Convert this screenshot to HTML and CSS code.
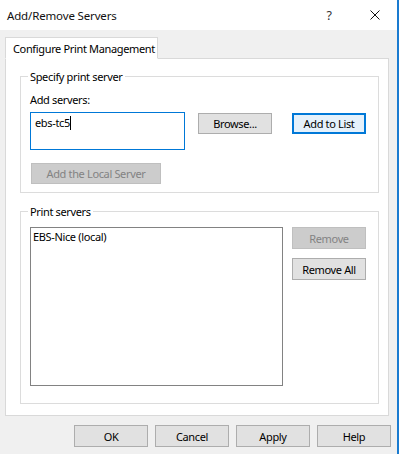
FILE: index.html
```html
<!DOCTYPE html>
<html>
<head>
<meta charset="utf-8">
<link rel="stylesheet" href="styles.css">
</head>
<body>
<div class="window">
  <div class="titlebar">
    <span class="title">Add/Remove Servers</span>
    <span class="caption-btn help">?</span>
    <span class="caption-btn close">
      <svg width="10" height="10" viewBox="0 0 10 10"><path d="M0.5 0.5 L9.5 9.5 M9.5 0.5 L0.5 9.5" stroke="#111" stroke-width="1" fill="none"/></svg>
    </span>
  </div>
  <div class="client">
    <div class="tabs">
      <div class="tab">Configure Print Management</div>
    </div>
    <div class="panel">
      <div class="group group-specify">
        <div class="legend">Specify print server</div>
        <div class="label">Add servers:</div>
        <div class="row">
          <div class="textbox">ebs-tc5<span class="caret"></span></div>
          <button class="btn browse">Browse...</button>
          <button class="btn default add-list">Add to List</button>
        </div>
        <button class="btn disabled local">Add the Local Server</button>
      </div>
      <div class="group group-servers">
        <div class="legend">Print servers</div>
        <div class="row">
          <div class="listbox"><div class="item">EBS-Nice (local)</div></div>
          <div class="side-buttons">
            <button class="btn disabled">Remove</button>
            <button class="btn">Remove All</button>
          </div>
        </div>
      </div>
    </div>
    <div class="dialog-buttons">
      <button class="btn">OK</button>
      <button class="btn">Cancel</button>
      <button class="btn">Apply</button>
      <button class="btn">Help</button>
    </div>
  </div>
</div>
</body>
</html>
```

FILE: styles.css
```css
html, body {
  margin: 0;
  padding: 0;
  background: #f0f0f0;
}
body {
  font-family: "Segoe UI", "Noto Sans", sans-serif;
  font-size: 11px;
  letter-spacing: -0.35px;
  color: #000;
}
.window {
  width: 397px;
  height: 454px;
  border-right: 2px solid #1a7bd0;
  display: flex;
  flex-direction: column;
  background: #f0f0f0;
}
.titlebar {
  height: 30px;
  background: #ffffff;
  display: flex;
  align-items: center;
  padding-left: 7px;
  flex: none;
}
.title {
  flex: 1;
  font-size: 11.5px;
  letter-spacing: -0.15px;
  line-height: 15px;
  color: #111;
}
.caption-btn {
  width: 46px;
  height: 30px;
  display: flex;
  align-items: center;
  justify-content: center;
}
.caption-btn.help {
  font-size: 12.5px;
  color: #333;
}
.caption-btn.close {
  width: 45px;
}
.client {
  flex: 1;
  padding: 7px 8px 0 5px;
  display: flex;
  flex-direction: column;
}
.tabs {
  display: flex;
}
.tab {
  position: relative;
  z-index: 1;
  box-sizing: border-box;
  width: 153px;
  height: 22px;
  padding: 3px 0 0 7px;
  border: 1px solid #d9d9d9;
  border-bottom: 1px solid #ffffff;
  background: #ffffff;
  line-height: 15px;
  white-space: nowrap;
  margin-bottom: -1px;
}
.panel {
  height: 358px;
  box-sizing: border-box;
  border: 1px solid #d9d9d9;
  background: #ffffff;
  padding: 17px 0 0 14px;
}
.group {
  width: 359px;
  box-sizing: border-box;
  border: 1px solid #dcdcdc;
  padding-left: 9px;
}
.legend {
  width: fit-content;
  margin: -8px 0 0 -2px;
  padding: 0 2px;
  background: #ffffff;
  line-height: 15px;
  white-space: nowrap;
}
.label {
  margin-top: 8px;
  line-height: 15px;
}
.row {
  display: flex;
  align-items: flex-start;
}
.group-specify .row {
  margin-top: 5px;
}
.group-specify {
  padding-bottom: 8px;
}
.textbox {
  width: 155px;
  height: 38px;
  box-sizing: border-box;
  border: 1px solid #0078d7;
  padding: 2px 4px;
  line-height: 15px;
  display: flex;
  align-items: flex-start;
}
.caret {
  display: inline-block;
  width: 1px;
  height: 14px;
  background: #000;
  margin-top: 1px;
}
.btn {
  font-family: inherit;
  font-size: 11px;
  letter-spacing: -0.35px;
  color: #000;
  width: 74px;
  height: 21px;
  box-sizing: border-box;
  border: 1px solid #adadad;
  background: #e1e1e1;
  padding: 0;
  margin: 0;
  line-height: 15px;
  white-space: nowrap;
}
.btn.default {
  border: 2px solid #0078d7;
  background: #e5f1fb;
}
.btn.disabled {
  border-color: #bfbfbf;
  background: #cccccc;
  color: #838383;
}
.browse {
  margin: 1px 0 0 13px;
}
.add-list {
  margin: 1px 0 0 20px;
}
.local {
  width: 130px;
  margin: 13px 0 0 1px;
  display: block;
}
.group-servers {
  margin-top: 18px;
  padding-bottom: 17px;
}
.group-servers .row {
  margin-top: 8px;
}
.listbox {
  width: 253px;
  height: 159px;
  box-sizing: border-box;
  border: 1px solid #828282;
  padding: 1px 2px;
  line-height: 15px;
}
.side-buttons {
  margin-left: 9px;
  display: flex;
  flex-direction: column;
  gap: 9px;
}
.side-buttons .btn {
  height: 22px;
}
.dialog-buttons {
  margin-top: 9px;
  margin-right: -2px;
  display: flex;
  justify-content: flex-end;
  gap: 7px;
}
.dialog-buttons .btn {
  height: 22px;
}
```
